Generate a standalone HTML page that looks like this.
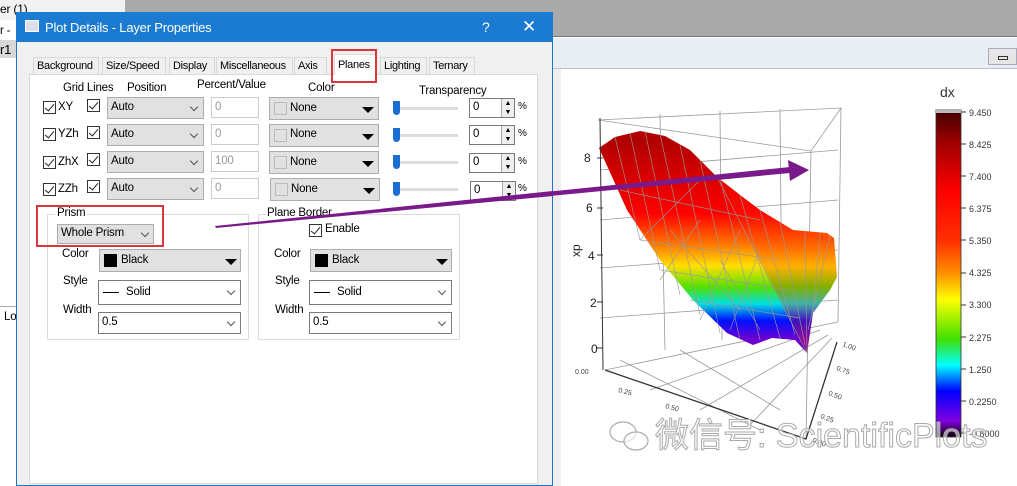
<!DOCTYPE html>
<html><head><meta charset="utf-8"><style>
*{margin:0;padding:0;box-sizing:border-box}
body{width:1017px;height:486px;overflow:hidden;position:relative;background:#fff;font-family:"Liberation Sans",sans-serif;font-size:11.5px;color:#000}
.a{position:absolute}
.t{position:absolute;white-space:nowrap;font-size:11.5px;letter-spacing:-0.2px}
.dd{position:absolute;background:#e1e1e1;border:1px solid #adadad}
.dw{position:absolute;background:#fff;border:1px solid #7a7a7a}
.cb{position:absolute;width:13px;height:13px;border:1px solid #333;background:#fff}
.cb:after{content:"";position:absolute;left:3px;top:0px;width:4px;height:8px;border:solid #222;border-width:0 1.3px 1.3px 0;transform:rotate(40deg)}
.chev{position:absolute;width:6px;height:6px;border:solid #555;border-width:0 1px 1px 0;transform:rotate(45deg)}
.tri{position:absolute;width:0;height:0;border-left:6px solid transparent;border-right:6px solid transparent;border-top:6px solid #000}
.tab{position:absolute;top:57px;height:17px;background:#f0f0f0;border:1px solid #d9d9d9;border-bottom:none;font-size:11px;letter-spacing:-0.3px;padding:2px 0 0 3px;white-space:nowrap;overflow:hidden}
</style></head><body>
<div class="a" style="left:0;top:0;width:1017px;height:486px;background:#fff"></div>
<div class="a" style="left:125px;top:0;width:892px;height:37px;background:#a9a9a9;border-bottom:1px solid #777"></div>
<div class="a" style="left:0;top:0;width:125px;height:20px;background:#f2f2f2"></div>
<div class="t" style="left:0;top:2px;font-size:12px">er (1)</div>
<div class="t" style="left:0;top:25px">r - </div>
<div class="a" style="left:0;top:40px;width:16px;height:18px;background:#d8d8d8"></div>
<div class="t" style="left:0;top:42px;font-size:13px">r1</div>
<div class="a" style="left:0;top:306px;width:16px;height:1px;background:#aaa"></div>
<div class="t" style="left:4px;top:311px">Lo</div>
<div class="a" style="left:553px;top:38px;width:464px;height:31px;background:#e9eef4;border-bottom:1px solid #b9c2cc"></div>
<div class="a" style="left:988px;top:48px;width:29px;height:17px;background:#e6e6e6;border:1px solid #aab"></div>
<div class="a" style="left:998px;top:56px;width:10px;height:4px;border:1px solid #333"></div>
<div class="a" style="left:553px;top:69px;width:8px;height:417px;background:#eee"></div>

<svg class="a" style="left:0;top:0" width="1017" height="486">
<defs>
<linearGradient id="sg" x1="0" y1="140" x2="0" y2="350" gradientUnits="userSpaceOnUse">
<stop offset="0" stop-color="#b00000"/><stop offset="0.35" stop-color="#ff0000"/><stop offset="0.5" stop-color="#ff7a00"/><stop offset="0.6" stop-color="#ffe000"/><stop offset="0.7" stop-color="#55e000"/><stop offset="0.78" stop-color="#00e0e0"/><stop offset="0.86" stop-color="#0010ff"/><stop offset="0.95" stop-color="#7000d0"/><stop offset="1" stop-color="#6000c0"/>
</linearGradient>
<linearGradient id="cg" x1="0" y1="110" x2="0" y2="437" gradientUnits="userSpaceOnUse">
<stop offset="0" stop-color="#400000"/><stop offset="0.1" stop-color="#a00000"/><stop offset="0.25" stop-color="#ff0000"/><stop offset="0.4" stop-color="#ff3000"/><stop offset="0.5" stop-color="#ff9000"/><stop offset="0.58" stop-color="#ffff00"/><stop offset="0.7" stop-color="#40e000"/><stop offset="0.78" stop-color="#00ffff"/><stop offset="0.86" stop-color="#0000ff"/><stop offset="0.95" stop-color="#8000e0"/><stop offset="0.98" stop-color="#400060"/><stop offset="1" stop-color="#000"/>
</linearGradient>
</defs>
<g stroke="#999" stroke-width="0.8" fill="none">
<path d="M598 120 L841 108 L838 322 M598 120 L811 151 L841 108 M811 151 L806 439 M605 370 L838 322 M660 114 L665 350 M720 111 L722 340 M780 109 L782 330 M600 170 L838 150 M600 220 L838 200 M600 268 L838 250 M600 318 L838 300 M650 390 L820 330 M700 410 L828 335 M750 425 L832 338 M620 360 L760 430 M680 350 L780 410"/>
</g>
<path d="M599 148 L615 137 L640 131 L665 136 L690 150 L717 177 L740 195 L760 210 L793 230 L827 233 L834 238 L837 277 L830 290 L813 313 L807 353 L795 340 L772 338 L753 345 L727 333 L693 300 L660 260 L627 210 Z" fill="url(#sg)"/>
<path d="M717 177 L760 260 L790 320 L807 353 L813 313 L830 290 L837 277 L834 238 L793 230 L760 210 Z" fill="#ff2000" opacity="0.25"/>
<g stroke="#999" stroke-width="0.7" fill="none" opacity="0.9">
<path d="M615 137 L640 240 M630 133 L660 270 M645 131 L680 295 M660 134 L700 315 M680 145 L720 333 M700 160 L740 340 M720 178 L760 340 M740 195 L780 338 M760 210 L795 335 M780 222 L805 345 M805 232 L807 353 M820 233 L813 313 M830 236 L808 330 M620 190 L760 220 M640 240 L780 260 M660 270 L790 290 M690 300 L800 318 M700 220 L660 280 M740 230 L700 320 M720 260 L760 330 M670 230 L740 310 M760 250 L730 330 M700 180 L640 240 M717 177 L807 353"/>
</g>
<g stroke="#333" stroke-width="1" fill="none">
<path d="M600 118 L603 370 M597 158 L603 158 M597 208 L603 208 M597 255 L603 255 M597 302 L603 302 M597 348 L603 348"/>
<path d="M605 370 L806 439 L837 342" stroke-width="1.3"/>
</g>
<g font-family="Liberation Sans,sans-serif" font-size="12" fill="#222">
<text x="584" y="162">8</text><text x="586" y="212">6</text><text x="588" y="260">4</text><text x="590" y="307">2</text><text x="591" y="353">0</text>
<text transform="translate(580,257) rotate(-90)" font-size="12">xp</text>
</g>
<g font-family="Liberation Sans,sans-serif" font-size="7" fill="#444">
<text x="575" y="374">0.00</text><text x="618" y="392" transform="rotate(15 618 392)">0.25</text><text x="665" y="408" transform="rotate(15 665 408)">0.50</text>
<text x="842" y="346" transform="rotate(20 842 346)">1.00</text><text x="836" y="370" transform="rotate(20 836 370)">0.75</text><text x="828" y="395" transform="rotate(20 828 395)">0.50</text><text x="820" y="418" transform="rotate(20 820 418)">0.25</text><text x="812" y="442" transform="rotate(20 812 442)">0.00</text>
</g>
<rect x="936" y="110" width="25" height="327" fill="url(#cg)" stroke="#333" stroke-width="0.8"/>
<rect x="936" y="110" width="25" height="3" fill="#bbb"/>
<g stroke="#333"><path d="M961 112 h5 M961 144 h5 M961 176 h5 M961 208 h5 M961 240 h5 M961 273 h5 M961 305 h5 M961 337 h5 M961 369 h5 M961 401 h5 M961 433 h5"/></g>
<g font-family="Liberation Sans,sans-serif" font-size="9" fill="#333">
<text x="969" y="116">9.450</text><text x="969" y="148">8.425</text><text x="969" y="180">7.400</text><text x="969" y="212">6.375</text><text x="969" y="244">5.350</text><text x="969" y="276">4.325</text><text x="969" y="308">3.300</text><text x="969" y="341">2.275</text><text x="969" y="373">1.250</text><text x="969" y="405">0.2250</text><text x="969" y="437">-0.8000</text>
<text x="940" y="97" font-size="14">dx</text>
</g>
<text x="655" y="447" font-family="Liberation Sans,Noto Sans CJK SC,sans-serif" font-size="34" fill="#fff" fill-opacity="0.6" stroke="#aaa" stroke-width="1">微信号: ScientificPlots</text>
<g stroke="#aaa" fill="#fff" fill-opacity="0.6" stroke-width="1.2"><ellipse cx="623" cy="432" rx="13" ry="10"/><ellipse cx="636" cy="441" rx="12" ry="9"/></g>
<path d="M215 226 L790 167 L790 173 L216 228 Z" fill="#7a1a8a"/>
<path d="M788 160 L809 170 L790 181 Z" fill="#7a1a8a"/>
</svg>

<div class="a" style="left:16px;top:12px;width:537px;height:474px;background:#f0f0f0;border:1px solid #1a78cc;border-top:none"></div>
<div class="a" style="left:16px;top:12px;width:537px;height:30px;background:#1a7bd0"></div>
<div class="a" style="left:25px;top:20px;width:14px;height:12px;background:#dde;border:1px solid #fff"></div>
<div class="t" style="left:45px;top:20px;color:#fff;font-size:13px">Plot Details - Layer Properties</div>
<div class="t" style="left:482px;top:19px;color:#fff;font-size:14px">?</div>
<div class="t" style="left:522px;top:17px;color:#fff;font-size:17px">✕</div>
<div class="a" style="left:29px;top:74px;width:509px;height:410px;background:#fff;border:1px solid #d9d9d9"></div>
<div class="tab" style="left:33px;width:66px">Background</div>
<div class="tab" style="left:102px;width:64px">Size/Speed</div>
<div class="tab" style="left:169px;width:46px">Display</div>
<div class="tab" style="left:216px;width:77px">Miscellaneous</div>
<div class="tab" style="left:294px;width:33px">Axis</div>
<div class="tab" style="left:334px;top:54px;height:21px;width:42px;background:#fff;padding-top:4px">Planes</div>
<div class="tab" style="left:380px;width:47px">Lighting</div>
<div class="tab" style="left:429px;width:46px">Ternary</div>
<div class="a" style="left:331px;top:49px;width:46px;height:34px;border:2px solid #d9363e"></div>

<div class="t" style="left:63px;top:82px">Grid Lines</div>
<div class="t" style="left:127px;top:82px">Position</div>
<div class="t" style="left:197px;top:79px">Percent/Value</div>
<div class="t" style="left:308px;top:82px">Color</div>
<div class="t" style="left:419px;top:85px">Transparency</div>

<div class="cb" style="left:43px;top:101px"></div><div class="t" style="left:58px;top:101px">XY</div>
<div class="cb" style="left:87px;top:99px"></div>
<div class="dd" style="left:107px;top:97px;width:97px;height:22px"><span class="t" style="left:3px;top:3px">Auto</span><span class="chev" style="left:83px;top:6px"></span></div>
<div class="dw" style="left:211px;top:97px;width:48px;height:21px;border-color:#ccc"><span class="t" style="left:3px;top:3px;color:#999">0</span></div>
<div class="dd" style="left:269px;top:97px;width:110px;height:23px"><span class="a" style="left:4px;top:4px;width:13px;height:13px;border:1px solid #bbb"></span><span class="t" style="left:20px;top:4px">None</span><span class="tri" style="left:92px;top:9px"></span></div>
<div class="a" style="left:394px;top:107px;width:64px;height:3px;background:#ddd"></div><div class="a" style="left:393px;top:101px;width:7px;height:14px;background:#1a6fd0;border-radius:0 0 4px 4px"></div>
<div class="dw" style="left:469px;top:98px;width:46px;height:20px"><span class="t" style="left:3px;top:2px">0</span><span class="a" style="left:31px;top:0;width:13px;height:18px;background:#eee;border-left:1px solid #aaa;font-size:7px;line-height:9px;text-align:center">▲<br>▼</span></div>
<div class="t" style="left:518px;top:101px;font-size:10px">%</div>

<div class="cb" style="left:43px;top:128px"></div><div class="t" style="left:58px;top:128px">YZh</div>
<div class="cb" style="left:87px;top:126px"></div>
<div class="dd" style="left:107px;top:124px;width:97px;height:22px"><span class="t" style="left:3px;top:3px">Auto</span><span class="chev" style="left:83px;top:6px"></span></div>
<div class="dw" style="left:211px;top:124px;width:48px;height:21px;border-color:#ccc"><span class="t" style="left:3px;top:3px;color:#999">0</span></div>
<div class="dd" style="left:269px;top:124px;width:110px;height:23px"><span class="a" style="left:4px;top:4px;width:13px;height:13px;border:1px solid #bbb"></span><span class="t" style="left:20px;top:3px">None</span><span class="tri" style="left:92px;top:9px"></span></div>
<div class="a" style="left:394px;top:134px;width:64px;height:3px;background:#ddd"></div><div class="a" style="left:393px;top:128px;width:7px;height:14px;background:#1a6fd0;border-radius:0 0 4px 4px"></div>
<div class="dw" style="left:469px;top:125px;width:46px;height:20px"><span class="t" style="left:3px;top:2px">0</span><span class="a" style="left:31px;top:0;width:13px;height:18px;background:#eee;border-left:1px solid #aaa;font-size:7px;line-height:9px;text-align:center">▲<br>▼</span></div>
<div class="t" style="left:518px;top:128px;font-size:10px">%</div>

<div class="cb" style="left:43px;top:156px"></div><div class="t" style="left:58px;top:156px">ZhX</div>
<div class="cb" style="left:87px;top:153px"></div>
<div class="dd" style="left:107px;top:151px;width:97px;height:22px"><span class="t" style="left:3px;top:3px">Auto</span><span class="chev" style="left:83px;top:6px"></span></div>
<div class="dw" style="left:211px;top:151px;width:48px;height:21px;border-color:#ccc"><span class="t" style="left:3px;top:3px;color:#999">100</span></div>
<div class="dd" style="left:269px;top:151px;width:110px;height:23px"><span class="a" style="left:4px;top:4px;width:13px;height:13px;border:1px solid #bbb"></span><span class="t" style="left:20px;top:4px">None</span><span class="tri" style="left:92px;top:9px"></span></div>
<div class="a" style="left:394px;top:161px;width:64px;height:3px;background:#ddd"></div><div class="a" style="left:393px;top:155px;width:7px;height:14px;background:#1a6fd0;border-radius:0 0 4px 4px"></div>
<div class="dw" style="left:469px;top:153px;width:46px;height:20px"><span class="t" style="left:3px;top:2px">0</span><span class="a" style="left:31px;top:0;width:13px;height:18px;background:#eee;border-left:1px solid #aaa;font-size:7px;line-height:9px;text-align:center">▲<br>▼</span></div>
<div class="t" style="left:518px;top:156px;font-size:10px">%</div>

<div class="cb" style="left:43px;top:183px"></div><div class="t" style="left:58px;top:183px">ZZh</div>
<div class="cb" style="left:87px;top:180px"></div>
<div class="dd" style="left:107px;top:178px;width:97px;height:22px"><span class="t" style="left:3px;top:3px">Auto</span><span class="chev" style="left:83px;top:6px"></span></div>
<div class="dw" style="left:211px;top:178px;width:48px;height:21px;border-color:#ccc"><span class="t" style="left:3px;top:3px;color:#999">0</span></div>
<div class="dd" style="left:270px;top:178px;width:110px;height:23px"><span class="a" style="left:4px;top:4px;width:13px;height:13px;border:1px solid #bbb"></span><span class="t" style="left:20px;top:4px">None</span><span class="tri" style="left:92px;top:9px"></span></div>
<div class="a" style="left:394px;top:188px;width:64px;height:3px;background:#ddd"></div><div class="a" style="left:393px;top:182px;width:7px;height:14px;background:#1a6fd0;border-radius:0 0 4px 4px"></div>
<div class="dw" style="left:470px;top:181px;width:46px;height:20px"><span class="t" style="left:3px;top:2px">0</span><span class="a" style="left:31px;top:0;width:13px;height:18px;background:#eee;border-left:1px solid #aaa;font-size:7px;line-height:9px;text-align:center">▲<br>▼</span></div>
<div class="t" style="left:518px;top:183px;font-size:10px">%</div>

<div class="a" style="left:47px;top:214px;width:202px;height:126px;border:1px solid #dcdcdc"></div>
<div class="t" style="left:55px;top:207px;background:#fff;padding:0 2px">Prism</div>
<div class="dd" style="left:57px;top:224px;width:97px;height:20px"><span class="t" style="left:3px;top:2px">Whole Prism</span><span class="chev" style="left:84px;top:5px"></span></div>
<div class="a" style="left:36px;top:205px;width:128px;height:42px;border:2px solid #d9363e"></div>
<div class="t" style="left:62px;top:248px">Color</div>
<div class="dd" style="left:99px;top:249px;width:142px;height:23px"><span class="a" style="left:4px;top:4px;width:13px;height:13px;background:#000"></span><span class="t" style="left:21px;top:4px">Black</span><span class="tri" style="left:125px;top:9px"></span></div>
<div class="t" style="left:63px;top:275px">Style</div>
<div class="dw" style="left:98px;top:280px;width:143px;height:25px"><span class="a" style="left:4px;top:11px;width:16px;height:1px;background:#000"></span><span class="t" style="left:27px;top:5px">Solid</span><span class="chev" style="left:129px;top:7px"></span></div>
<div class="t" style="left:63px;top:304px">Width</div>
<div class="dw" style="left:98px;top:312px;width:143px;height:22px"><span class="t" style="left:3px;top:3px">0.5</span><span class="chev" style="left:129px;top:6px"></span></div>

<div class="a" style="left:258px;top:214px;width:202px;height:126px;border:1px solid #dcdcdc"></div>
<div class="t" style="left:266px;top:207px;background:#fff;padding:0 1px">Plane Border</div>
<div class="cb" style="left:309px;top:224px"></div><div class="t" style="left:325px;top:223px">Enable</div>
<div class="t" style="left:274px;top:248px">Color</div>
<div class="dd" style="left:310px;top:249px;width:142px;height:23px"><span class="a" style="left:4px;top:4px;width:13px;height:13px;background:#000"></span><span class="t" style="left:21px;top:4px">Black</span><span class="tri" style="left:125px;top:9px"></span></div>
<div class="t" style="left:275px;top:275px">Style</div>
<div class="dw" style="left:309px;top:280px;width:143px;height:25px"><span class="a" style="left:4px;top:11px;width:16px;height:1px;background:#000"></span><span class="t" style="left:27px;top:5px">Solid</span><span class="chev" style="left:129px;top:7px"></span></div>
<div class="t" style="left:275px;top:304px">Width</div>
<div class="dw" style="left:309px;top:312px;width:143px;height:22px"><span class="t" style="left:3px;top:3px">0.5</span><span class="chev" style="left:129px;top:6px"></span></div>

<svg class="a" style="left:0;top:0" width="1017" height="486"><path d="M215 226 L553 191 L553 196 L216 228 Z" fill="#7a1a8a"/></svg>
</body></html>
